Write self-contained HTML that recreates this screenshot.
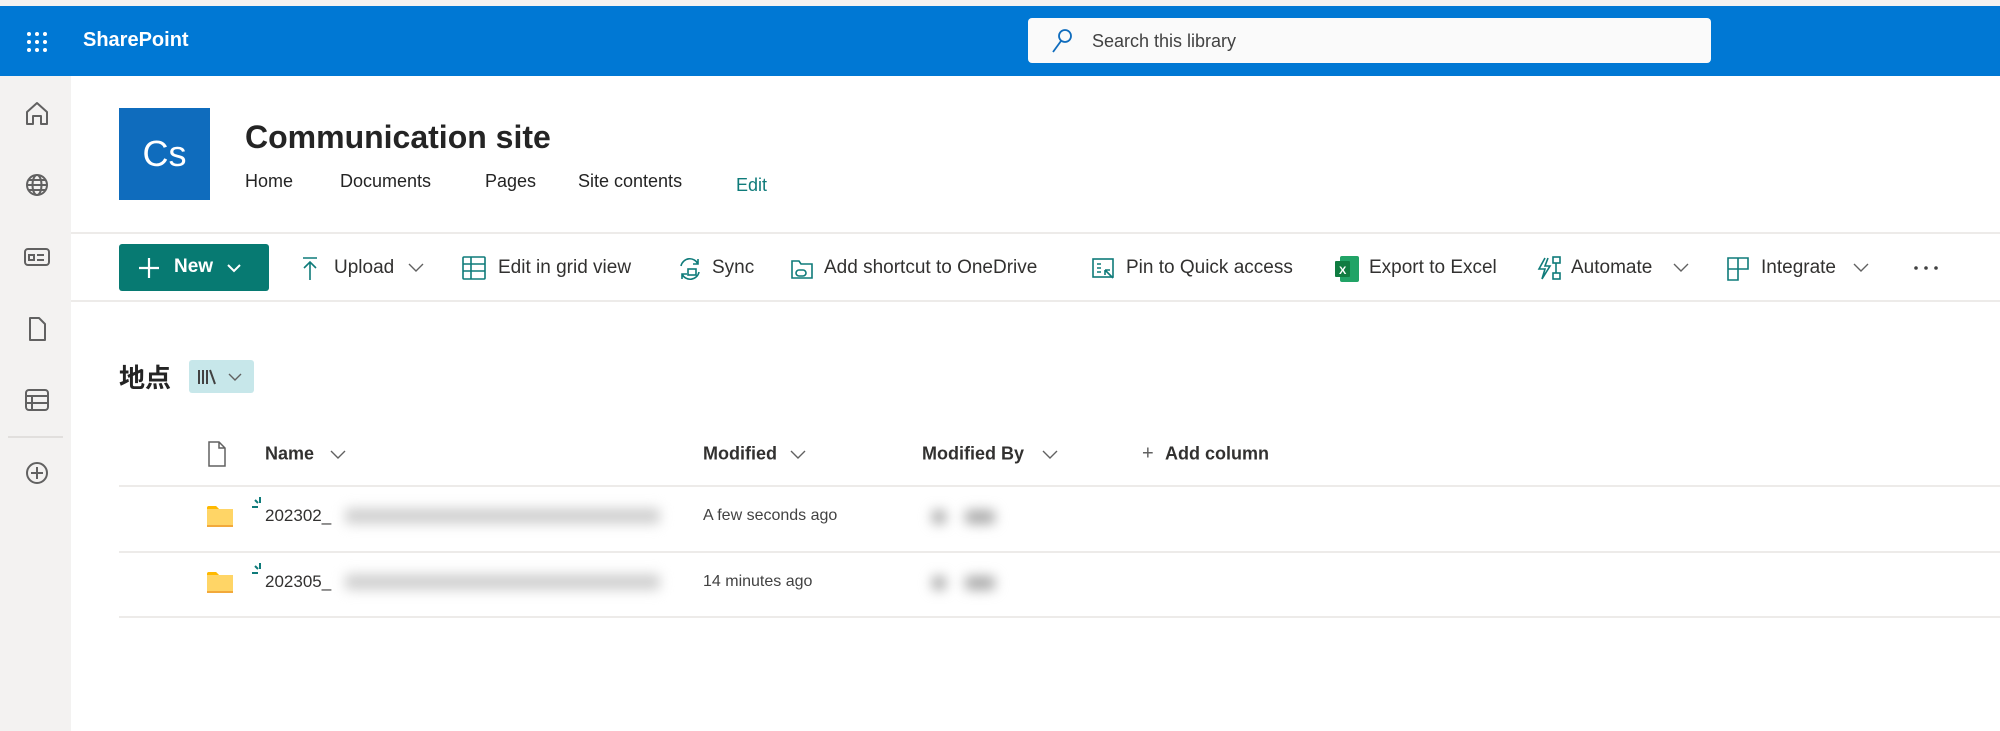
<!DOCTYPE html>
<html><head><meta charset="utf-8"><style>
*{margin:0;padding:0;box-sizing:border-box}
body{width:2000px;height:731px;overflow:hidden;background:#fff;font-family:"Segoe UI","Liberation Sans","Noto Sans CJK SC",sans-serif;color:#323130;position:relative}
.a{position:absolute;white-space:nowrap}
.cmd{position:absolute;top:268px;transform:translateY(-50%);font-size:19px;color:#323130}
.ic{position:absolute;top:256px}
.hdr{position:absolute;top:454px;transform:translateY(-50%);font-size:18px;font-weight:600;color:#323130}
.line{position:absolute;left:119px;right:0;height:2px;background:#edebe9}
.blur{position:absolute;background:#d0d0d0;filter:blur(6px);border-radius:4px}
</style></head><body>
<div class="a" style="left:0;top:0;width:2000px;height:6px;background:#f3f2f1"></div>
<div class="a" style="left:0;top:6px;width:2000px;height:70px;background:#0078d4"></div>
<svg class="a" style="left:26px;top:31px" width="22" height="22" viewBox="0 0 22 22" fill="#fff">
<circle cx="3" cy="3" r="2"/><circle cx="11" cy="3" r="2"/><circle cx="19" cy="3" r="2"/>
<circle cx="3" cy="11" r="2"/><circle cx="11" cy="11" r="2"/><circle cx="19" cy="11" r="2"/>
<circle cx="3" cy="19" r="2"/><circle cx="11" cy="19" r="2"/><circle cx="19" cy="19" r="2"/></svg>
<div class="a" style="left:83px;top:29px;color:#fff;font-size:20px;font-weight:600">SharePoint</div>
<div class="a" style="left:1028px;top:18px;width:683px;height:45px;background:#fafafa;border-radius:4px"></div>
<svg class="a" style="left:1050px;top:28px" width="24" height="26" viewBox="0 0 24 26" fill="none" stroke="#0f6cbd" stroke-width="1.8"><circle cx="15" cy="8" r="6"/><path d="M11 13L3 24"/></svg>
<div class="a" style="left:1092px;top:31px;font-size:18px;color:#424242">Search this library</div>

<div class="a" style="left:0;top:76px;width:71px;height:655px;background:#f3f2f1"></div>
<svg class="a" style="left:0;top:76px" width="71" height="420" fill="none" stroke="#616161" stroke-width="2">
<path d="M27 48V36l10-9 10 9v12h-6v-8h-8v8z" stroke-linejoin="round"/>
<circle cx="37" cy="109" r="10"/><ellipse cx="37" cy="109" rx="4.5" ry="10"/><path d="M27 109h20M29 104h16M29 114h16"/>
<rect x="25" y="173" width="24" height="16" rx="3"/><path d="M29 179h5v5h-5zM37 179h7M37 184h7"/>
<path d="M30 242h9l6 6v16H30z" stroke-linejoin="round"/>
<rect x="26" y="314" width="22" height="20" rx="3"/><path d="M26 320h22M26 327h22M32 320v14"/>
<path d="M8 361h55" stroke="#e1dfdd"/>
<circle cx="37" cy="397" r="10"/><path d="M37 391v12M31 397h12"/>
</svg>

<div class="a" style="left:119px;top:108px;width:91px;height:92px;background:#0f6cbd;color:#fff;font-size:36px;display:flex;align-items:center;justify-content:center">Cs</div>
<div class="a" style="left:245px;top:119px;font-size:32px;font-weight:600;color:#242424">Communication site</div>
<div class="a" style="left:245px;top:171px;font-size:18px;color:#242424">Home</div>
<div class="a" style="left:340px;top:171px;font-size:18px;color:#242424">Documents</div>
<div class="a" style="left:485px;top:171px;font-size:18px;color:#242424">Pages</div>
<div class="a" style="left:578px;top:171px;font-size:18px;color:#242424">Site contents</div>
<div class="a" style="left:736px;top:175px;font-size:18px;color:#0f7b7a">Edit</div>

<div class="a" style="left:71px;top:232px;width:1929px;height:2px;background:#edebe9"></div>
<div class="a" style="left:71px;top:300px;width:1929px;height:2px;background:#edebe9"></div>
<div class="a" style="left:119px;top:244px;width:150px;height:47px;background:#077a72;border-radius:3px;color:#fff;font-size:19px;font-weight:600"><svg class="a" style="left:20px;top:14px" width="20" height="20" stroke="#fff" stroke-width="2.2"><path d="M10 0v20M0 10h20"/></svg><span class="a" style="left:55px;top:12px">New</span><svg class="a" style="left:107px;top:18px" width="16" height="12" fill="none" stroke="#fff" stroke-width="2"><path d="M2 3l6 6 6-6"/></svg></div>

<svg class="ic" style="left:300px" width="20" height="26" fill="none" stroke="#0f7b7a" stroke-width="1.6"><path d="M3 2h14M10 6v18M4 12l6-6 6 6"/></svg>
<div class="cmd" style="left:334px">Upload</div>
<svg class="ic" style="left:408px;top:263px" width="16" height="10" fill="none" stroke="#616161" stroke-width="1.4"><path d="M1 1l7 7 7-7"/></svg>
<svg class="ic" style="left:462px" width="24" height="24" fill="none" stroke="#0f7b7a" stroke-width="1.6"><rect x="1" y="1" width="22" height="22" rx="1"/><path d="M1 8h22M1 15h22M9 1v22"/></svg>
<div class="cmd" style="left:498px">Edit in grid view</div>
<svg class="ic" style="left:677px" width="26" height="26" fill="none" stroke="#0f7b7a" stroke-width="1.6"><path d="M4 10a9 9 0 0 1 17-2M22 16a9 9 0 0 1-17 2M21 3v5h-5M5 23v-5h5"/><rect x="11" y="13" width="8" height="6"/></svg>
<div class="cmd" style="left:712px">Sync</div>
<svg class="ic" style="left:790px" width="24" height="26" fill="none" stroke="#0f7b7a" stroke-width="1.6"><path d="M2 5h7l2 3h11v14H2z"/><rect x="6" y="14" width="10" height="6" rx="3"/></svg>
<div class="cmd" style="left:824px">Add shortcut to OneDrive</div>
<svg class="ic" style="left:1091px" width="26" height="26" fill="none" stroke="#0f7b7a" stroke-width="1.6"><rect x="2" y="3" width="20" height="18"/><path d="M6 8h4M6 12h4M6 16h4M14 14l8 8M14 14v5M14 14h5"/></svg>
<div class="cmd" style="left:1126px">Pin to Quick access</div>
<svg class="ic" style="left:1334px;top:255px" width="26" height="28"><rect x="6" y="1" width="19" height="26" rx="2" fill="#21a366"/><rect x="1" y="6" width="15" height="16" rx="1" fill="#107c41"/><text x="5" y="19" font-size="11" font-family="Liberation Sans" font-weight="bold" fill="#fff">X</text></svg>
<div class="cmd" style="left:1369px">Export to Excel</div>
<svg class="ic" style="left:1537px" width="26" height="26" fill="none" stroke="#0f7b7a" stroke-width="1.6"><path d="M8 2L2 13h6l-3 10 8-13H8l3-8"/><rect x="16" y="1" width="7" height="6"/><rect x="16" y="17" width="7" height="6"/><path d="M19 7v10"/></svg>
<div class="cmd" style="left:1571px">Automate</div>
<svg class="ic" style="left:1673px;top:263px" width="16" height="10" fill="none" stroke="#616161" stroke-width="1.4"><path d="M1 1l7 7 7-7"/></svg>
<svg class="ic" style="left:1726px" width="24" height="26" fill="none" stroke="#0f7b7a" stroke-width="1.6"><path d="M2 2h20v11H2zM12 2v11M2 13v11h10V13"/></svg>
<div class="cmd" style="left:1761px">Integrate</div>
<svg class="ic" style="left:1853px;top:263px" width="16" height="10" fill="none" stroke="#616161" stroke-width="1.4"><path d="M1 1l7 7 7-7"/></svg>
<svg class="a" style="left:1913px;top:265px" width="26" height="6" fill="#424242"><circle cx="3" cy="3" r="1.8"/><circle cx="13" cy="3" r="1.8"/><circle cx="23" cy="3" r="1.8"/></svg>

<div class="a" style="left:119px;top:360px;font-size:26px;font-weight:700;color:#242424;font-family:'Noto Sans CJK SC',sans-serif;line-height:34px">地点</div>
<div class="a" style="left:189px;top:360px;width:65px;height:33px;background:#c7e7ea;border-radius:3px"></div>
<svg class="a" style="left:197px;top:368px" width="50" height="18" fill="none" stroke="#424242" stroke-width="2"><path d="M2 2v14M6 2v14M10 2v14M13 2l5 14"/><path d="M32 6l6 6 6-6" stroke-width="1.4" stroke="#616161"/></svg>

<svg class="a" style="left:207px;top:441px" width="20" height="26" fill="none" stroke="#616161" stroke-width="1.5"><path d="M2 1h10l6 6v18H2zM12 1v6h6"/></svg>
<div class="hdr" style="left:265px">Name</div>
<svg class="a" style="left:330px;top:450px" width="16" height="10" fill="none" stroke="#616161" stroke-width="1.4"><path d="M1 1l7 7 7-7"/></svg>
<div class="hdr" style="left:703px">Modified</div>
<svg class="a" style="left:790px;top:450px" width="16" height="10" fill="none" stroke="#616161" stroke-width="1.4"><path d="M1 1l7 7 7-7"/></svg>
<div class="hdr" style="left:922px">Modified By</div>
<svg class="a" style="left:1042px;top:450px" width="16" height="10" fill="none" stroke="#616161" stroke-width="1.4"><path d="M1 1l7 7 7-7"/></svg>
<div class="hdr" style="left:1142px;font-weight:400;font-size:20px;color:#616161">+</div>
<div class="hdr" style="left:1165px">Add column</div>

<div class="line" style="top:485px"></div>
<div class="line" style="top:551px"></div>
<div class="line" style="top:616px"></div>

<svg class="a" style="left:207px;top:505px" width="28" height="22"><path d="M0 3a2 2 0 0 1 2-2h7l3 3h14v17H0z" fill="#ffd566"/><path d="M0 3a2 2 0 0 1 2-2h7l3 3H0z" fill="#ffb900"/><rect x="0" y="20" width="26" height="2" fill="#f2a93b"/></svg>
<svg class="a" style="left:251px;top:496px" width="14" height="14" stroke="#0f7b7a" stroke-width="2"><path d="M1 11h6M9 1v6M4 4l3 3"/></svg>
<div class="a" style="left:265px;top:506px;font-size:17px;color:#323130">202302_</div>
<div class="blur" style="left:345px;top:508px;width:315px;height:16px"></div>
<div class="a" style="left:703px;top:507px;font-size:16px;color:#424242">A few seconds ago</div>
<div class="blur" style="left:932px;top:510px;width:14px;height:14px;background:#aaa"></div>
<div class="blur" style="left:965px;top:510px;width:30px;height:14px;background:#aaa"></div>

<svg class="a" style="left:207px;top:571px" width="28" height="22"><path d="M0 3a2 2 0 0 1 2-2h7l3 3h14v17H0z" fill="#ffd566"/><path d="M0 3a2 2 0 0 1 2-2h7l3 3H0z" fill="#ffb900"/><rect x="0" y="20" width="26" height="2" fill="#f2a93b"/></svg>
<svg class="a" style="left:251px;top:562px" width="14" height="14" stroke="#0f7b7a" stroke-width="2"><path d="M1 11h6M9 1v6M4 4l3 3"/></svg>
<div class="a" style="left:265px;top:572px;font-size:17px;color:#323130">202305_</div>
<div class="blur" style="left:345px;top:574px;width:315px;height:16px"></div>
<div class="a" style="left:703px;top:573px;font-size:16px;color:#424242">14 minutes ago</div>
<div class="blur" style="left:932px;top:576px;width:14px;height:14px;background:#aaa"></div>
<div class="blur" style="left:965px;top:576px;width:30px;height:14px;background:#aaa"></div>
</body></html>
